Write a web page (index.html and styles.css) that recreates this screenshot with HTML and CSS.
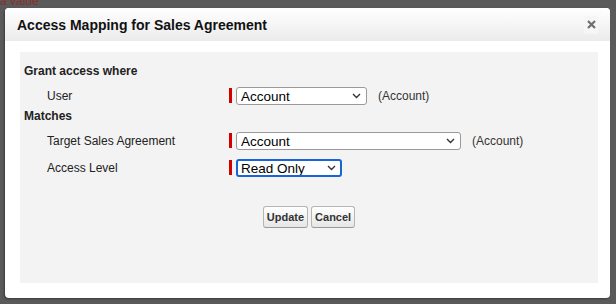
FILE: index.html
```html
<!DOCTYPE html>
<html lang="en">
<head>
    <meta charset="UTF-8">
    <title>Access Mapping for Sales Agreement</title>
    <link rel="stylesheet" href="styles.css">
</head>
<body>
    <span class="behind">a value</span>

    <div class="dialog">
        <div class="dialog-header">
            <h2>Access Mapping for Sales Agreement</h2>
            <span class="close"><svg width="9" height="9" viewBox="0 0 9 9"><path d="M1 1l7 7M8 1l-7 7" stroke="#6f6f6f" stroke-width="2.2"/></svg></span>
        </div>

        <div class="dialog-body">
            <div class="panel">
                <div class="section">Grant access where</div>

                <div class="field-row">
                    <label>User</label>
                    <div class="field">
                        <span class="required"></span>
                        <div class="select-wrap w-user">
                            <select>
                                <option>Account</option>
                            </select>
                            <svg class="chevron" width="9" height="6" viewBox="0 0 9 6"><path d="M1 1l3.5 3.5L8 1" fill="none" stroke="#333" stroke-width="1.4"/></svg>
                        </div>
                        <span class="hint">(Account)</span>
                    </div>
                </div>

                <div class="section">Matches</div>

                <div class="field-row">
                    <label>Target Sales Agreement</label>
                    <div class="field">
                        <span class="required"></span>
                        <div class="select-wrap w-target">
                            <select>
                                <option>Account</option>
                            </select>
                            <svg class="chevron" width="9" height="6" viewBox="0 0 9 6"><path d="M1 1l3.5 3.5L8 1" fill="none" stroke="#333" stroke-width="1.4"/></svg>
                        </div>
                        <span class="hint">(Account)</span>
                    </div>
                </div>

                <div class="field-row">
                    <label>Access Level</label>
                    <div class="field">
                        <span class="required"></span>
                        <div class="select-wrap w-level focused">
                            <select>
                                <option>Read Only</option>
                                <option>Read/Write</option>
                            </select>
                            <svg class="chevron" width="9" height="6" viewBox="0 0 9 6"><path d="M1 1l3.5 3.5L8 1" fill="none" stroke="#333" stroke-width="1.4"/></svg>
                        </div>
                    </div>
                </div>

                <div class="buttons">
                    <button class="btn">Update</button>
                    <button class="btn">Cancel</button>
                </div>
            </div>
        </div>
    </div>
</body>
</html>
```

FILE: styles.css
```css
* {
    box-sizing: border-box;
}

body {
    margin: 0;
    width: 616px;
    height: 304px;
    overflow: hidden;
    background: #5a5a5a;
    font-family: "Liberation Sans", Arial, sans-serif;
    color: #222;
    position: relative;
}

/* page text peeking out behind the overlay */
.behind {
    position: absolute;
    top: -6px;
    left: 0;
    font-size: 12px;
    line-height: 14px;
    color: #8a2f2a;
}

.dialog {
    position: relative;
    margin: 8px 6px 0 5px;
    height: 290px;
    background: #fff;
    border-radius: 4px;
    box-shadow: -1px 1px 2px rgba(0, 0, 0, 0.35);
}

.dialog-header {
    height: 33px;
    display: flex;
    align-items: center;
    justify-content: space-between;
    padding: 0 12px 0 12px;
    background: linear-gradient(#fff, #ebebeb);
    border-radius: 4px 4px 0 0;
}

.dialog-header h2 {
    margin: 0;
    font-size: 14px;
    font-weight: bold;
    color: #111;
}

.close {
    width: 14px;
    height: 18px;
    display: flex;
    align-items: center;
    justify-content: center;
    background: #f6f6f6;
    border-radius: 2px;
}

.dialog-body {
    padding: 11px 12px 15px 15px;
}

.panel {
    height: 231px;
    background: #f3f3f3;
    padding: 10px 4px 0 4px;
}

.section {
    height: 18px;
    line-height: 18px;
    font-size: 12px;
    font-weight: bold;
}

.field-row {
    height: 23px;
    margin-top: 4px;
    display: flex;
    align-items: center;
}

.field-row label {
    width: 205px;
    padding-left: 23px;
    font-size: 12px;
}

.field {
    display: flex;
    align-items: center;
}

.required {
    width: 3px;
    height: 15px;
    background: #d40000;
    margin-right: 4px;
}

.select-wrap {
    position: relative;
    height: 18px;
}

.select-wrap select {
    -webkit-appearance: none;
    appearance: none;
    width: 100%;
    height: 100%;
    margin: 0;
    padding: 0 16px 0 4px;
    background: #fff;
    border: 1px solid #9a9a9a;
    border-radius: 3px;
    font-family: "Liberation Sans", Arial, sans-serif;
    font-size: 13.5px;
    color: #000;
    outline: none;
}

.select-wrap.focused select {
    border: 2px solid #1a64d6;
    padding-left: 3px;
}

.chevron {
    position: absolute;
    right: 6px;
    top: 6px;
    pointer-events: none;
}

.w-user { width: 131px; }
.w-target { width: 225px; }
.w-level { width: 106px; }

.hint {
    margin-left: 11px;
    font-size: 12px;
    color: #333;
}

.buttons {
    margin-top: 27px;
    display: flex;
    justify-content: center;
    gap: 3px;
}

.btn {
    height: 22px;
    margin: 0;
    padding: 0 3px;
    font-family: "Liberation Sans", Arial, sans-serif;
    font-size: 11px;
    font-weight: bold;
    color: #333;
    background: linear-gradient(#fff, #e6e6e6);
    border: 1px solid #b5b5b5;
    border-bottom-color: #9a9a9a;
    border-radius: 3px;
}
```
